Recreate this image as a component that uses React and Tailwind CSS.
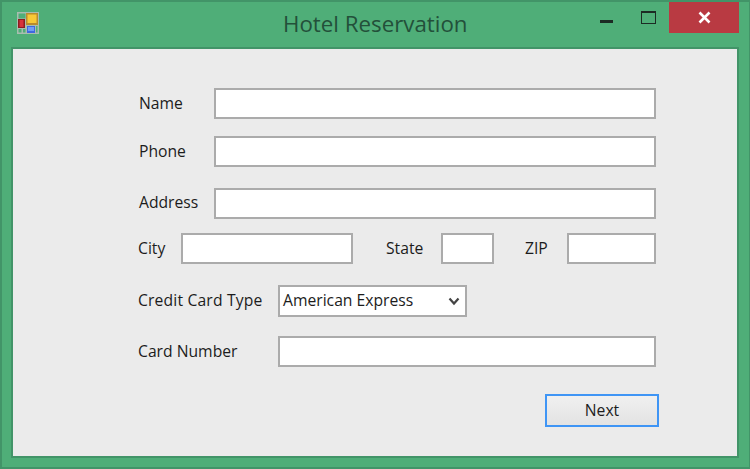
import React from 'react';

const Field = ({ className }) => (
  <div className={`h-[31px] border-2 border-[#ababab] bg-white ${className}`} />
);

const Label = ({ className, children }) => (
  <span className={`text-[15.7px] leading-[20px] text-[#1c1c1c] ${className}`}>{children}</span>
);

const AppIcon = () => (
  <svg width="22" height="22" viewBox="0 0 22 22" className="shrink-0">
    <rect x="0" y="0" width="22" height="22" fill="#a9bdb0" />
    <rect x="1.5" y="1.5" width="7" height="5" fill="#4fae78" />
    <rect x="9" y="1" width="12" height="12" fill="#b98b2e" />
    <rect x="10.5" y="2.5" width="9" height="8.5" fill="#f8c936" />
    <rect x="1" y="7" width="7" height="9" fill="#8c1c20" />
    <rect x="2.5" y="8" width="4" height="7" fill="#d8323a" />
    <rect x="10" y="14" width="8" height="7" fill="#3f68e0" />
    <rect x="11" y="15" width="6" height="4" fill="#6f9df5" />
    <rect x="1.5" y="17" width="3" height="3.5" fill="#4fae78" />
    <rect x="6" y="17" width="2.5" height="3.5" fill="#4fae78" />
    <rect x="19" y="14" width="1.5" height="6.5" fill="#4fae78" />
  </svg>
);

export default function App() {
  return (
    <div className="w-[750px] h-[469px] overflow-hidden flex flex-col bg-[#4fae78] border-2 border-r border-[#429468] font-['Open_Sans',sans-serif]">
      {/* Title bar */}
      <div className="h-[45px] shrink-0 flex items-start">
        <div className="pl-[15px] pt-[10px]">
          <AppIcon />
        </div>
        <div className="ml-[244px] w-[186px] pt-[7px] text-[22.3px] leading-[30px] text-[#23503a] whitespace-nowrap">
          Hotel Reservation
        </div>
        <div className="ml-[131px] pt-[18px]">
          <div className="w-[13px] h-[3px] bg-[#1c2b24]" />
        </div>
        <div className="ml-[28px] pt-[9px]">
          <div className="w-[15px] h-[13px] border border-t-2 border-[#1c2b24]" />
        </div>
        <div className="ml-[13px] -mt-[1px] w-[70px] h-[32px] bg-[#b93a42] flex items-center justify-center">
          <svg width="13" height="13" viewBox="0 0 13 13">
            <path d="M1.5 1.5 L11.5 11.5 M11.5 1.5 L1.5 11.5" stroke="#fff" strokeWidth="2.6" />
          </svg>
        </div>
      </div>

      {/* Form panel */}
      <div className="w-[728px] h-[411px] ml-[9px] border-2 border-[#429468] bg-[#ebebeb] flex flex-col pt-[39px] pl-[125px]">
        <div className="flex items-center h-[31px]">
          <Label className="w-[76px] pl-[1px] -mt-[2px]">Name</Label>
          <Field className="w-[442px]" />
        </div>
        <div className="flex items-center h-[31px] mt-[17px]">
          <Label className="w-[76px] pl-[1px] -mt-[2px]">Phone</Label>
          <Field className="w-[442px]" />
        </div>
        <div className="flex items-center h-[31px] mt-[21px]">
          <Label className="w-[76px] pl-[1px] -mt-[4px]">Address</Label>
          <Field className="w-[442px]" />
        </div>
        <div className="flex items-center h-[31px] mt-[14px]">
          <Label className="w-[43px] -mt-[2px]">City</Label>
          <Field className="w-[172px]" />
          <Label className="w-[55px] ml-[33px] -mt-[2px]">State</Label>
          <Field className="w-[53px]" />
          <Label className="w-[42px] ml-[31px] -mt-[2px]">ZIP</Label>
          <Field className="w-[89px]" />
        </div>
        <div className="flex items-center h-[32px] mt-[21px]">
          <Label className="w-[140px] whitespace-nowrap tracking-[0.01em] -mt-[2px]">Credit Card Type</Label>
          <div className="w-[189px] h-[32px] border-2 border-[#ababab] bg-white flex items-center justify-between pl-[3px] pr-[5px]">
            <span className="text-[15.7px] leading-[20px] text-[#1c1c1c] -mt-[2px]">American Express</span>
            <svg width="12" height="9" viewBox="0 0 12 9">
              <path d="M1.5 1.5 L6 6.5 L10.5 1.5" fill="none" stroke="#444" strokeWidth="2.2" />
            </svg>
          </div>
        </div>
        <div className="flex items-center h-[31px] mt-[19px]">
          <Label className="w-[140px] -mt-[2px]">Card Number</Label>
          <Field className="w-[378px]" />
        </div>
        <div className="flex mt-[27px] ml-[407px]">
          <button className="w-[114px] h-[33px] border-2 border-[#3f95f5] bg-gradient-to-b from-[#f0f0f0] to-[#e3e3e3] text-[15.7px] leading-[20px] pb-[2px] text-[#1c1c1c] font-['Open_Sans',sans-serif]">
            Next
          </button>
        </div>
      </div>
    </div>
  );
}
